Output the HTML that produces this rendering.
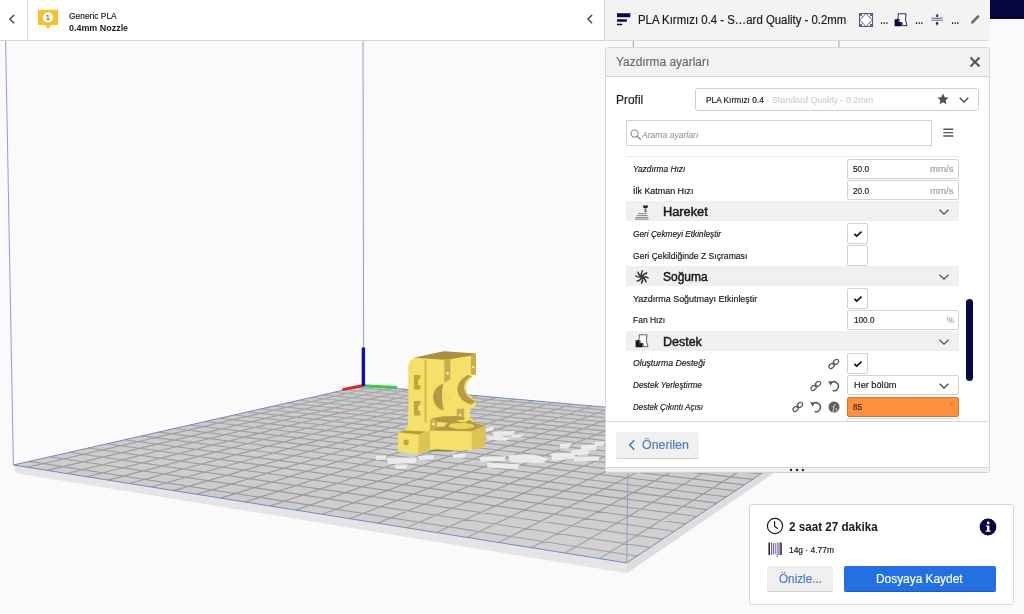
<!DOCTYPE html>
<html lang="tr">
<head>
<meta charset="utf-8">
<title>Cura - Yazdırma ayarları</title>
<style>
html,body{margin:0;padding:0}
body{width:1024px;height:614px;overflow:hidden;background:#fafafa;position:relative;font-family:"Liberation Sans", sans-serif;}
.a{position:absolute;box-sizing:border-box}
.t{position:absolute;white-space:pre;line-height:normal;font-family:"Liberation Sans", sans-serif;transform-origin:0 0;}
#tx{position:absolute;left:0;top:0;width:1024px;height:614px;will-change:transform}
svg{position:absolute;overflow:visible}
</style>
</head>
<body>
<div id="tx">
<svg width="1024" height="614" viewBox="0 0 1024 614" style="left:0;top:0">
<polygon points="14.4,465.0 626.7,562.9 626.7,573.2 15.4,473.0" fill="#e5e5e5"/>
<polygon points="626.7,562.9 831.0,427.3 831.0,434.3 626.7,573.2" fill="#dddddd"/>
<polygon points="363.7,385.6 13.4,465.0 626.7,562.9 831.0,427.3" fill="#cdcccc"/>
<path d="M355.8 387.4L826.9 430.0M375.8 386.7L27.6 467.3M345.1 389.8L821.2 433.8M392.1 388.1L47.0 470.4M334.1 392.3L815.4 437.6M408.7 389.6L66.8 473.5M322.8 394.9L809.4 441.6M425.6 391.1L87.1 476.8M311.1 397.5L803.1 445.8M442.8 392.7L107.9 480.1M299.2 400.2L796.7 450.1M460.3 394.2L129.3 483.5M286.9 403.0L790.0 454.5M478.1 395.8L151.2 487.0M274.3 405.9L783.1 459.1M496.2 397.4L173.7 490.6M261.2 408.8L775.9 463.9M514.7 399.1L196.8 494.3M247.9 411.9L768.4 468.9M533.4 400.7L220.6 498.1M234.1 415.0L760.6 474.0M552.6 402.5L244.9 502.0M219.8 418.2L752.6 479.4M572.0 404.2L270.0 506.0M205.2 421.5L744.2 484.9M591.9 406.0L295.8 510.1M190.1 425.0L735.4 490.7M612.1 407.8L322.3 514.3M174.5 428.5L726.3 496.8M632.7 409.6L349.5 518.7M158.4 432.1L716.8 503.1M653.6 411.5L377.6 523.1M141.8 435.9L706.9 509.6M675.0 413.4L406.5 527.7M124.6 439.8L696.6 516.5M696.8 415.3L436.3 532.5M106.8 443.8L685.8 523.7M719.1 417.3L467.0 537.4M88.4 448.0L674.4 531.2M741.8 419.3L498.6 542.5M69.4 452.3L662.5 539.1M764.9 421.4L531.3 547.7M49.7 456.8L650.1 547.4M788.5 423.5L565.0 553.1M29.2 461.4L637.0 556.1M812.6 425.7L599.8 558.6" stroke="#989898" stroke-width="1.15" fill="none"/>
<defs><linearGradient id="fade" gradientUnits="userSpaceOnUse" x1="0" y1="386" x2="0" y2="563"><stop offset="0" stop-color="#cac9c9" stop-opacity="0.36"/><stop offset="0.3" stop-color="#cac9c9" stop-opacity="0.12"/><stop offset="0.6" stop-color="#ffffff" stop-opacity="0"/><stop offset="1" stop-color="#ffffff" stop-opacity="0.15"/></linearGradient></defs>
<polygon points="363.7,385.6 13.4,465.0 626.7,562.9 831.0,427.3" fill="url(#fade)"/>
<g fill="#f0f0f0" opacity="0.9">
<polygon points="486.0,427.9 494.2,426.7 493.0,430.2 486.0,431.4" fill="#f0f0f0"/>
<polygon points="491.9,431.9 515.3,430.9 513.0,435.6 494.2,436.1" fill="#f0f0f0"/>
<polygon points="486.0,436.6 501.2,436.1 510.6,438.4 505.9,440.8 487.2,439.6" fill="#f0f0f0"/>
<polygon points="513.0,434.9 524.7,434.2 520.0,437.3 510.6,438.0" fill="#f0f0f0"/>
<polygon points="375.9,456.0 386.4,455.3 385.2,459.5 375.9,460.0" fill="#f0f0f0"/>
<polygon points="386.4,458.4 416.9,457.2 415.7,463.0 388.7,464.2" fill="#f0f0f0"/>
<polygon points="394.6,465.4 407.5,464.7 406.3,468.4 395.8,468.9" fill="#f0f0f0"/>
<polygon points="418.0,456.0 434.4,455.3 433.3,459.5 419.2,460.0" fill="#f0f0f0"/>
<polygon points="452.0,454.4 466.1,453.7 464.9,457.7 453.2,458.1" fill="#f0f0f0"/>
<polygon points="480.1,457.2 505.9,456.2 504.8,460.9 480.1,461.4" fill="#f0f0f0"/>
<polygon points="508.3,455.3 534.0,454.4 548.1,458.4 543.4,463.0 510.6,461.9" fill="#f0f0f0"/>
<polygon points="487.2,463.0 520.0,464.2 517.6,468.9 487.2,467.7" fill="#f0f0f0"/>
<polygon points="550.5,453.7 573.9,452.5 576.2,458.4 552.8,460.7" fill="#f0f0f0"/>
<polygon points="559.8,444.3 571.5,443.1 569.2,447.8 559.8,449.0" fill="#f0f0f0"/>
<polygon points="571.5,450.2 590.3,449.0 588.0,454.8 571.5,455.3" fill="#f0f0f0"/>
<polygon points="580.9,445.5 597.3,444.3 596.2,450.2 580.9,450.6" fill="#f0f0f0"/>
<polygon points="595.0,442.0 604.4,441.5 604.4,445.5 595.0,446.6" fill="#f0f0f0"/>
<polygon points="573.9,457.2 599.7,456.7 598.5,460.7 573.9,461.2" fill="#f0f0f0"/>
</g>
<polygon points="363.7,385.6 13.4,465.0 626.7,562.9 831.0,427.3" fill="none" stroke="#6f8cba" stroke-width="1"/>
<path d="M13.4 465.0L5.6 40M363.7 385.6L363 40M626.7 562.9L633.4 40M831.0 427.3L839 40" stroke="#86a2cc" stroke-width="1" fill="none"/>
<path d="M363.4 385.5L342.4 389.6" stroke="#d42a2a" stroke-width="3" fill="none"/>
<path d="M363.4 385.8L397 387.4" stroke="#3fc84a" stroke-width="3" fill="none"/>
<path d="M363.4 386L363.4 347.5" stroke="#0c0cb4" stroke-width="3.4" fill="none"/>
<g><polygon points="408.3,410.8 407.7,426.9 404.0,430.6 398.1,432.3 398.1,451.6 418.0,454.0 430.3,449.7 450.2,450.8 471.7,450.0 485.2,446.2 485.2,425.8 474.9,423.1 472.8,419.4 465.3,418.3 464.2,408.6 433.0,408.6" fill="#f5e069"/>
<polygon points="429.8,430.6 430.9,422.0 435.2,417.2 465.3,417.7 474.9,423.1 485.2,425.8 471.7,431.2" fill="#b59a44"/>
<ellipse cx="461.5" cy="426.1" rx="12.7" ry="3.2" fill="#e9cd58"/>
<ellipse cx="459.9" cy="425.1" rx="10.2" ry="1.9" fill="#f0d65c"/>
<polygon points="398.1,432.3 404.0,430.4 426.0,431.4 419.0,434.6" fill="#b59a44"/>
<polygon points="419.0,434.6 429.8,430.6 430.3,449.7 418.0,454.0" fill="#dfc254"/>
<polygon points="471.7,431.2 485.2,425.8 485.2,446.2 471.7,450.0" fill="#dfc254"/>
<ellipse cx="406.1" cy="442.5" rx="2.6" ry="2.9" fill="#c2a440"/>
<polygon points="425.5,451.4 435.2,449.2 454.5,450.5 450.2,451.6 433.0,451.2" fill="#8c8040"/>
<polygon points="408.3,411.0 408.3,366.5 409.9,361.1 413.7,357.7 443.8,351.5 475.5,353.4 476.0,375.1 470.6,375.6 465.8,380.5 464.2,388.0 465.8,395.5 470.6,400.9 476.0,400.9 475.5,405.8 470.1,409.5 470.1,419.2 465.3,422.4 450.2,420.3 443.8,426.7 430.9,426.7 425.5,422.4 408.3,422.4" fill="#f5e069"/>
<polygon points="413.9,357.7 443.8,351.2 475.5,353.4 470.9,355.8 445.9,359.8" fill="#a98f42"/>
<polygon points="470.9,355.8 476.0,353.6 476.0,375.1 470.9,374.2" fill="#cbae4c"/>
<polygon points="444.3,360.1 450.4,358.8 450.4,379.2 444.3,382.8" fill="#cbae4c"/>
<polygon points="424.6,360.1 426.6,360.3 426.6,422.4 424.6,422.4" fill="#d7b84a"/>
<polygon points="413.9,375.1 420.3,375.1 420.3,379.2 418.2,379.2 418.2,385.3 420.3,385.3 420.3,389.6 413.9,389.6" fill="#c3a540"/>
<polygon points="413.9,400.9 420.3,400.9 420.3,405.0 418.2,405.0 418.2,411.1 420.3,411.1 420.3,415.4 413.9,415.4" fill="#c3a540"/>
<path d="M443.2 383.5Q433.0 387.5 433.0 397.7Q434.1 407.9 443.8 410.6Q440.5 397.7 443.2 383.5Z" fill="#b59a44"/>
<path d="M467.6 374.9Q456.1 381.6 457.5 391.2Q459.9 402.0 471.7 404.4L476.0 401.1Q465.3 397.7 464.2 388.0Q464.2 379.9 471.9 376.0Z" fill="#b79b40"/>
<path d="M471.9 376.0Q464.2 379.9 464.2 388.0Q465.3 397.7 476.0 401.1L474.9 399.3Q466.9 396.1 466.1 388.0Q466.3 381.0 473.3 376.7Z" fill="#f2dc70"/>
<circle cx="447.5" cy="373.2" r="1.3" fill="#f8ecb4"/>
<circle cx="473.3" cy="367.0" r="1.2" fill="#f8ecb4"/>
<circle cx="444.3" cy="397.7" r="0.6" fill="#c8aa44"/>
<circle cx="449.1" cy="397.9" r="0.6" fill="#c8aa44"/>
<polygon points="456.7,409.1 464.2,408.6 464.2,420.4 456.7,419.4" fill="#cbae4c"/>
<circle cx="460.1" cy="415.1" r="1.2" fill="#f8ecb4"/>
<polygon points="430.3,418.8 437.3,422.0 436.2,429.0 430.3,430.6" fill="#cbae4c"/>
<circle cx="433.5" cy="423.9" r="1.4" fill="#f8ecb4"/>
<polygon points="431.4,418.3 443.8,416.3 456.7,416.1 465.3,418.3 450.2,423.1 437.3,422.0" fill="#b59a44"/></g>
</svg>
<!-- top bar -->
<div class="a" style="left:0;top:0;width:605px;height:41px;background:#fff;border-bottom:1px solid #d6d6d6"></div>
<div class="a" style="left:27px;top:0;width:1px;height:40px;background:#dedede"></div>
<svg width="8" height="12" viewBox="0 0 8 12" style="left:8px;top:13px"><path d="M6.1 1.9L1.9 6.1L6.1 10.3" fill="none" stroke="#454545" stroke-width="1.4"/></svg>
<svg width="8" height="12" viewBox="0 0 8 12" style="left:585.5px;top:13px"><path d="M6.1 1.9L1.9 6.1L6.1 10.3" fill="none" stroke="#454545" stroke-width="1.4"/></svg>
<!-- material marker -->
<svg width="22" height="22" viewBox="0 0 22 22" style="left:37px;top:9px"><path d="M2 0.7H20Q21 0.7 21 1.7V15Q21 16 20 16H14L11 20L8 16H2Q1 16 1 15V1.7Q1 0.7 2 0.7Z" fill="#f4c22e"/><circle cx="10.9" cy="8.4" r="5.1" fill="#fffdf2"/><text x="10.9" y="11.1" font-size="7.6" text-anchor="middle" fill="#333" font-family="Liberation Sans, sans-serif">1</text></svg>
<!-- top right gray -->
<div class="a" style="left:604px;top:0;width:386px;height:41px;background:#f3f3f3;border-left:1px solid #dadada;border-bottom:1px solid #dadada;border-radius:0 0 3px 0"></div>
<div class="a" style="left:990px;top:0;width:34px;height:19px;background:#08073f"></div>
<!-- profile icon -->
<svg width="16" height="16" viewBox="0 0 16 16" style="left:615.5px;top:12px"><path d="M1 1.2H14.3V5.2H1ZM1 7.2H10.8V9.7H1ZM1 11.8H6.2V13.2H1Z" fill="#08073f"/></svg>
<!-- infill icon -->
<svg width="14" height="14" viewBox="0 0 14 14" style="left:859px;top:12.5px"><rect x="0.5" y="0.5" width="13" height="13" fill="#fbfbfb" stroke="#4c4b72" stroke-width="0.9"/><path d="M7 0.5L13.5 7L7 13.5L0.5 7ZM3.6 0.5L0.5 3.6M10.4 0.5L13.5 3.6M0.5 10.4L3.6 13.5M13.5 10.4L10.4 13.5M0.5 0.5L3.7 3.7M13.5 0.5L10.3 3.7M0.5 13.5L3.7 10.3M13.5 13.5L10.3 10.3" stroke="#45446e" stroke-width="0.85" fill="none"/></svg>
<!-- support icon -->
<svg width="14" height="14" viewBox="0 0 14 14" style="left:893.8px;top:12.5px"><path d="M4.2 0.8H12Q10.3 6.5 13 12.6H8.2V9.6H5.2V6.6H3.4Q4.9 3.6 4.2 0.8Z" fill="#fff" stroke="#26255a" stroke-width="1"/><path d="M0.6 6.2H4.6V9.2H7.6V13.2H0.6Z" fill="#08073f"/></svg>
<!-- adhesion icon -->
<svg width="14" height="14" viewBox="0 0 14 14" style="left:929.7px;top:12.5px"><path d="M1.4 4.9Q7 6.1 12.8 4.9M1.4 7.2H12.8" stroke="#4a4a78" stroke-width="0.85" fill="none"/><path d="M7.1 4.6L5.5 2.4H6.6V0.9H7.6V2.4H8.7ZM7.1 8.6L8.7 10.8H7.6V12.6H6.6V10.8H5.5Z" fill="#08073f"/></svg>
<!-- pencil -->
<svg width="10.6" height="10.6" viewBox="0 0 12 12" style="left:969.5px;top:14px"><path d="M1 11L1.6 8.2L8.2 1.6Q9 0.8 9.8 1.6L10.4 2.2Q11.2 3 10.4 3.8L3.8 10.4Z" fill="#6e6e6e"/></svg>

<!-- settings panel -->
<div class="a" style="left:605px;top:47px;width:385px;height:426px;background:#fff;border:1px solid #d6d6d6;border-radius:3px"></div>
<div class="a" style="left:606px;top:48px;width:383px;height:29px;background:#f2f2f2;border-bottom:1px solid #d2d2d2;border-radius:2px 2px 0 0"></div>
<svg width="12" height="12" viewBox="0 0 12 12" style="left:969px;top:56px"><path d="M1.5 1.5L10.5 10.5M10.5 1.5L1.5 10.5" stroke="#555" stroke-width="2" fill="none"/></svg>
<!-- profile dropdown -->
<div class="a" style="left:695px;top:88px;width:284px;height:23px;background:#fff;border:1px solid #d0d0d0;border-radius:3px"></div>
<svg width="12" height="12" viewBox="0 0 13 13" style="left:937px;top:93px"><path d="M6.5 0.6L8.3 4.5L12.5 5L9.4 7.9L10.2 12.1L6.5 10L2.8 12.1L3.6 7.9L0.5 5L4.7 4.5Z" fill="#505050"/></svg>
<svg width="12" height="8" viewBox="0 0 12 8" style="left:958px;top:95.5px"><path d="M1.7 1.7L6 6L10.3 1.7" stroke="#454545" stroke-width="1.3" fill="none"/></svg>
<!-- search -->
<div class="a" style="left:626px;top:120px;width:306px;height:26px;background:#fff;border:1px solid #d2d2d2"></div>
<svg width="12" height="12" viewBox="0 0 12 12" style="left:630.2px;top:128.8px"><circle cx="4.6" cy="4.6" r="3.6" fill="none" stroke="#8a8a8a" stroke-width="1.1"/><path d="M7.2 7.2L10.8 10.8" stroke="#8a8a8a" stroke-width="1.3"/></svg>
<svg width="11" height="10" viewBox="0 0 11 10" style="left:942.5px;top:128px"><path d="M0.3 1.2H10.3M0.3 4.6H10.3M0.3 8H10.3" stroke="#555" stroke-width="1.4"/></svg>
<div class="a" style="left:626px;top:156px;width:333px;height:1px;background:#ececec"></div>
<!-- inputs -->
<div class="a" style="left:847px;top:159px;width:112px;height:20px;background:#fff;border:1px solid #d2d2d2;border-radius:2px"></div>
<div class="a" style="left:847px;top:180px;width:112px;height:20px;background:#fff;border:1px solid #d2d2d2;border-radius:2px"></div>
<div class="a" style="left:847px;top:310px;width:112px;height:20px;background:#fff;border:1px solid #d2d2d2;border-radius:2px"></div>
<div class="a" style="left:847px;top:375px;width:112px;height:20px;background:#fff;border:1px solid #d2d2d2;border-radius:2px"></div>
<div class="a" style="left:847px;top:397px;width:112px;height:20px;background:#ff913e;border:1px solid #c47a3c;border-radius:2px"></div>
<div class="a" style="left:847px;top:418px;width:112px;height:4px;background:#fff;border:1px solid #d8d8d8;border-bottom:none;border-radius:2px 2px 0 0"></div>
<!-- category headers -->
<div class="a" style="left:626px;top:201px;width:333px;height:20px;background:#f0f0f0"></div>
<div class="a" style="left:626px;top:266px;width:333px;height:20px;background:#f0f0f0"></div>
<div class="a" style="left:626px;top:331px;width:333px;height:20px;background:#f0f0f0"></div>
<svg width="12" height="8" viewBox="0 0 12 8" style="left:938px;top:208px"><path d="M1.5 1.7L6 6.1L10.5 1.7" stroke="#555" stroke-width="1.3" fill="none"/></svg>
<svg width="12" height="8" viewBox="0 0 12 8" style="left:938px;top:273px"><path d="M1.5 1.7L6 6.1L10.5 1.7" stroke="#555" stroke-width="1.3" fill="none"/></svg>
<svg width="12" height="8" viewBox="0 0 12 8" style="left:938px;top:337.8px"><path d="M1.5 1.7L6 6.1L10.5 1.7" stroke="#555" stroke-width="1.3" fill="none"/></svg>
<svg width="12" height="8" viewBox="0 0 12 8" style="left:938px;top:381.5px"><path d="M1.7 1.7L6 6L10.3 1.7" stroke="#454545" stroke-width="1.3" fill="none"/></svg>
<!-- category icons -->
<svg width="14" height="15" viewBox="0 0 14 15" style="left:635px;top:204.5px"><path d="M8 0.6H13Q13 3.4 10.5 3.6Q8 3.4 8 0.6Z" fill="#222"/><path d="M9.6 4.2H11.4V7H9.6Z" fill="#555"/><path d="M3 8.6H11.5M1.8 10.6H12.5M0.4 12.6H13.4M0.2 14.2H13.6" stroke="#555" stroke-width="0.7"/></svg>
<svg width="14" height="14" viewBox="0 0 14 14" style="left:634.5px;top:269.5px"><g fill="none" stroke="#333" stroke-width="1.5" stroke-linecap="round"><path d="M7 6.2Q5.6 3.6 7.4 0.9"/><path d="M7.8 6.4Q8.6 3.5 11.8 2.9"/><path d="M7.8 7.6Q10.4 6.2 13.1 8"/><path d="M7 7.8Q8.4 10.4 6.6 13.1"/><path d="M6.2 7.6Q5.4 10.5 2.2 11.1"/><path d="M6.2 6.4Q3.6 7.8 0.9 6"/><path d="M6.4 6.2Q3.6 5.3 3 2.2"/><path d="M7.6 7.8Q10.4 8.7 11 11.8"/></g></svg>
<svg width="14" height="14" viewBox="0 0 14 14" style="left:634.5px;top:334px"><path d="M4.2 0.8H12Q10.3 6.5 13 12.6H8.2V9.6H5.2V6.6H3.4Q4.9 3.6 4.2 0.8Z" fill="#fff" stroke="#555" stroke-width="0.9"/><path d="M0.6 6.2H4.6V9.2H7.6V13.2H0.6Z" fill="#1a1a1a"/></svg>
<!-- checkboxes -->
<div class="a" style="left:847px;top:223px;width:21px;height:21px;background:#fff;border:1px solid #d2d2d2;border-radius:2px"></div>
<div class="a" style="left:847px;top:245px;width:21px;height:21px;background:#fff;border:1px solid #d2d2d2;border-radius:2px"></div>
<div class="a" style="left:847px;top:288px;width:21px;height:21px;background:#fff;border:1px solid #d2d2d2;border-radius:2px"></div>
<div class="a" style="left:847px;top:353px;width:21px;height:21px;background:#fff;border:1px solid #d2d2d2;border-radius:2px"></div>
<svg width="10" height="8" viewBox="0 0 10 8" style="left:853px;top:229.7px"><path d="M1.3 3.9L3.7 6.2L8.5 1.6" stroke="#111" stroke-width="1.6" fill="none"/></svg>
<svg width="10" height="8" viewBox="0 0 10 8" style="left:853px;top:294.6px"><path d="M1.3 3.9L3.7 6.2L8.5 1.6" stroke="#111" stroke-width="1.6" fill="none"/></svg>
<svg width="10" height="8" viewBox="0 0 10 8" style="left:853px;top:359.6px"><path d="M1.3 3.9L3.7 6.2L8.5 1.6" stroke="#111" stroke-width="1.6" fill="none"/></svg>
<!-- link / revert / fx icons -->
<svg width="12" height="12" viewBox="0 0 12 12" style="left:828px;top:357.8px" class="lk"><g fill="none" stroke="#585858" stroke-width="1.25"><rect x="-2.9" y="-2.05" width="5.8" height="4.1" rx="2.05" transform="translate(3.6 7.9) rotate(-42)"/><rect x="-2.9" y="-2.05" width="5.8" height="4.1" rx="2.05" transform="translate(8 3.9) rotate(-42)"/><path d="M4.7 6.9L6.9 4.9"/></g></svg>
<svg width="12" height="12" viewBox="0 0 12 12" style="left:809.8px;top:379.5px"><g fill="none" stroke="#585858" stroke-width="1.25"><rect x="-2.9" y="-2.05" width="5.8" height="4.1" rx="2.05" transform="translate(3.6 7.9) rotate(-42)"/><rect x="-2.9" y="-2.05" width="5.8" height="4.1" rx="2.05" transform="translate(8 3.9) rotate(-42)"/><path d="M4.7 6.9L6.9 4.9"/></g></svg>
<svg width="12" height="12" viewBox="0 0 12 12" style="left:791.6px;top:401px"><g fill="none" stroke="#585858" stroke-width="1.25"><rect x="-2.9" y="-2.05" width="5.8" height="4.1" rx="2.05" transform="translate(3.6 7.9) rotate(-42)"/><rect x="-2.9" y="-2.05" width="5.8" height="4.1" rx="2.05" transform="translate(8 3.9) rotate(-42)"/><path d="M4.7 6.9L6.9 4.9"/></g></svg>
<svg width="12" height="12" viewBox="0 0 12 12" style="left:828px;top:379.5px"><path d="M2.6 3.2A4.5 4.5 0 1 1 4.6 10.6" fill="none" stroke="#585858" stroke-width="1.5"/><path d="M0.2 1.2L5 1.4L2.6 5.8Z" fill="#585858"/></svg>
<svg width="12" height="12" viewBox="0 0 12 12" style="left:809.8px;top:401px"><path d="M2.6 3.2A4.5 4.5 0 1 1 4.6 10.6" fill="none" stroke="#585858" stroke-width="1.5"/><path d="M0.2 1.2L5 1.4L2.6 5.8Z" fill="#585858"/></svg>
<svg width="12" height="12" viewBox="0 0 12 12" style="left:828px;top:401px"><circle cx="6" cy="6" r="5.5" fill="#5e5e5e"/><text x="5.6" y="8.8" font-size="8" font-style="italic" font-family="Liberation Serif, serif" fill="#fff" text-anchor="middle">f</text><text x="8.4" y="9.6" font-size="4.5" font-family="Liberation Sans, sans-serif" fill="#fff" text-anchor="middle">x</text></svg>
<!-- scrollbar -->
<div class="a" style="left:966px;top:299px;width:7px;height:81.5px;background:#08073f;border-radius:3.5px"></div>
<!-- footer -->
<div class="a" style="left:606px;top:417px;width:383px;height:4px;background:#fff"></div>
<div class="a" style="left:847px;top:418px;width:112px;height:3px;background:#fff;border:1px solid #dcdcdc;border-bottom:none;border-radius:2px 2px 0 0"></div>
<div class="a" style="left:606px;top:420.5px;width:383px;height:47px;background:#fff;border-top:1px solid #dadada"></div>
<div class="a" style="left:616px;top:432px;width:83px;height:27px;background:#f0f0f0;border-bottom:1px solid #d2d2d2;border-radius:2px"></div>
<svg width="8" height="12" viewBox="0 0 8 12" style="left:627.5px;top:438.5px"><path d="M6.2 1.3L1.8 6L6.2 10.7" fill="none" stroke="#4a7dbf" stroke-width="1.6"/></svg>
<div class="a" style="left:606px;top:467px;width:383px;height:6px;background:#f1f1f1;border-top:1px solid #d6d6d6;border-bottom:1px solid #d2d2d2;border-radius:0 0 2px 2px"></div>
<svg width="16" height="4" viewBox="0 0 16 4" style="left:789.4px;top:468.3px"><circle cx="2" cy="2" r="1.25" fill="#2a2a2a"/><circle cx="8" cy="2" r="1.25" fill="#2a2a2a"/><circle cx="13.9" cy="2" r="1.25" fill="#2a2a2a"/></svg>

<!-- action panel -->
<div class="a" style="left:749px;top:504px;width:265px;height:101px;background:#fff;border:1px solid #d8d8d8;border-radius:3px"></div>
<svg width="18" height="18" viewBox="0 0 18 18" style="left:766px;top:517px"><circle cx="9" cy="9" r="7.6" fill="none" stroke="#191919" stroke-width="1.2"/><path d="M8.6 4.2V9.4L12 11.8" fill="none" stroke="#191919" stroke-width="1.2"/></svg>
<svg width="18" height="18" viewBox="0 0 18 18" style="left:978.5px;top:517.6px"><circle cx="9" cy="9" r="8.4" fill="#08073f"/><circle cx="9.2" cy="4.9" r="1.4" fill="#fff"/><path d="M7 7.4H10.4V12.4H11.6V13.8H6.8V12.4H8V8.8H7Z" fill="#fff"/></svg>
<svg width="16" height="16" viewBox="0 0 16 16" style="left:767.6px;top:541.5px"><path d="M1.2 0.4V13M13 0.4V13" stroke="#1b1a4e" stroke-width="1.5" fill="none"/><path d="M3.7 0.4V13M11 0.4V13" stroke="#3c3b66" stroke-width="0.9" fill="none"/><path d="M5.5 1V12.4M7.3 1V12.4M9.2 0.4V15.4" stroke="#55557a" stroke-width="0.8" fill="none"/></svg>
<div class="a" style="left:767px;top:566px;width:66px;height:26px;background:#f0f0f0;border-bottom:1px solid #d0d0d0;border-radius:2px"></div>
<div class="a" style="left:844px;top:566px;width:152px;height:26px;background:#2270e2;border-bottom:1px solid #1a5bbd;border-radius:2px"></div>

<div class="t" style="left:68.70px;top:10.96px;font-size:9px;color:#191919;transform:scaleX(0.9347);-webkit-text-stroke:0.18px currentColor;">Generic PLA</div>
<div class="t" style="left:68.70px;top:22.66px;font-size:9px;font-weight:700;color:#191919;transform:scaleX(0.9928);">0.4mm Nozzle</div>
<div class="t" style="left:637.50px;top:13.34px;font-size:12px;color:#191919;transform:scaleX(0.9494);-webkit-text-stroke:0.18px currentColor;">PLA Kırmızı 0.4 - S…ard Quality - 0.2mm</div>
<div class="t" style="left:879.60px;top:13.90px;font-size:10.5px;font-weight:700;color:#191919;transform:scaleX(0.8000);">…</div>
<div class="t" style="left:914.80px;top:13.90px;font-size:10.5px;font-weight:700;color:#191919;transform:scaleX(0.8000);">…</div>
<div class="t" style="left:950.60px;top:13.90px;font-size:10.5px;font-weight:700;color:#191919;transform:scaleX(0.8000);">…</div>
<div class="t" style="left:615.50px;top:55.04px;font-size:12px;color:#6a6a6a;transform:scaleX(0.9935);-webkit-text-stroke:0.18px currentColor;">Yazdırma ayarları</div>
<div class="t" style="left:616.20px;top:93.04px;font-size:12px;color:#191919;transform:scaleX(0.9947);-webkit-text-stroke:0.18px currentColor;">Profil</div>
<div class="t" style="left:706.00px;top:94.76px;font-size:9px;color:#191919;transform:scaleX(0.9243);-webkit-text-stroke:0.18px currentColor;">PLA Kırmızı 0.4</div>
<div class="t" style="left:763.80px;top:94.76px;font-size:9px;color:#cfcfcf;transform:scaleX(0.9869);-webkit-text-stroke:0.18px currentColor;"> - Standard Quality - 0.2mm</div>
<div class="t" style="left:642.00px;top:130.16px;font-size:9px;font-style:italic;color:#a0a0a0;transform:scaleX(0.9537);-webkit-text-stroke:0.18px currentColor;">Arama ayarları</div>
<div class="t" style="left:633.10px;top:163.75px;font-size:9px;font-style:italic;color:#191919;transform:scaleX(0.9280);-webkit-text-stroke:0.18px currentColor;">Yazdırma Hızı</div>
<div class="t" style="left:633.10px;top:185.66px;font-size:9px;color:#191919;transform:scaleX(0.9897);-webkit-text-stroke:0.18px currentColor;">İlk Katman Hızı</div>
<div class="t" style="left:633.10px;top:228.75px;font-size:9px;font-style:italic;color:#191919;transform:scaleX(0.9174);-webkit-text-stroke:0.18px currentColor;">Geri Çekmeyi Etkinleştir</div>
<div class="t" style="left:633.10px;top:250.85px;font-size:9px;color:#191919;transform:scaleX(0.9561);-webkit-text-stroke:0.18px currentColor;">Geri Çekildiğinde Z Sıçraması</div>
<div class="t" style="left:633.10px;top:293.86px;font-size:9px;color:#191919;transform:scaleX(0.9953);-webkit-text-stroke:0.18px currentColor;">Yazdırma Soğutmayı Etkinleştir</div>
<div class="t" style="left:633.10px;top:315.36px;font-size:9px;color:#191919;transform:scaleX(0.9407);-webkit-text-stroke:0.18px currentColor;">Fan Hızı</div>
<div class="t" style="left:633.10px;top:358.36px;font-size:9px;font-style:italic;color:#191919;transform:scaleX(0.9647);-webkit-text-stroke:0.18px currentColor;">Oluşturma Desteği</div>
<div class="t" style="left:633.10px;top:380.25px;font-size:9px;font-style:italic;color:#191919;transform:scaleX(0.9128);-webkit-text-stroke:0.18px currentColor;">Destek Yerleştirme</div>
<div class="t" style="left:633.10px;top:401.86px;font-size:9px;font-style:italic;color:#191919;transform:scaleX(0.8881);-webkit-text-stroke:0.18px currentColor;">Destek Çıkıntı Açısı</div>
<div class="t" style="left:662.50px;top:204.94px;font-size:12px;color:#191919;transform:scaleX(1.0659);-webkit-text-stroke:0.45px #191919;">Hareket</div>
<div class="t" style="left:662.50px;top:270.04px;font-size:12px;color:#191919;transform:scaleX(0.9977);-webkit-text-stroke:0.45px #191919;">Soğuma</div>
<div class="t" style="left:662.50px;top:335.04px;font-size:12px;color:#191919;transform:scaleX(1.0386);-webkit-text-stroke:0.45px #191919;">Destek</div>
<div class="t" style="left:853.40px;top:164.16px;font-size:9px;color:#191919;transform:scaleX(0.9127);-webkit-text-stroke:0.18px currentColor;">50.0</div>
<div class="t" style="left:853.40px;top:185.85px;font-size:9px;color:#191919;transform:scaleX(0.9127);-webkit-text-stroke:0.18px currentColor;">20.0</div>
<div class="t" style="left:853.80px;top:315.36px;font-size:9px;color:#191919;transform:scaleX(0.9098);-webkit-text-stroke:0.18px currentColor;">100.0</div>
<div class="t" style="left:930.40px;top:164.16px;font-size:9px;color:#a0a0a0;transform:scaleX(1.0682);-webkit-text-stroke:0.18px currentColor;">mm/s</div>
<div class="t" style="left:930.40px;top:185.85px;font-size:9px;color:#a0a0a0;transform:scaleX(1.0682);-webkit-text-stroke:0.18px currentColor;">mm/s</div>
<div class="t" style="left:946.60px;top:315.36px;font-size:9px;color:#a0a0a0;transform:scaleX(0.8608);-webkit-text-stroke:0.18px currentColor;">%</div>
<div class="t" style="left:853.80px;top:380.25px;font-size:9px;color:#191919;transform:scaleX(1.0213);-webkit-text-stroke:0.18px currentColor;">Her bölüm</div>
<div class="t" style="left:853.40px;top:401.86px;font-size:9px;color:#42240c;transform:scaleX(0.9186);-webkit-text-stroke:0.18px currentColor;">85</div>
<div class="t" style="left:949.50px;top:401.86px;font-size:9px;color:#c07030;transform:scaleX(0.8312);-webkit-text-stroke:0.18px currentColor;">°</div>
<div class="t" style="left:641.60px;top:438.04px;font-size:12px;color:#4a7dbf;transform:scaleX(1.0318);-webkit-text-stroke:0.18px currentColor;">Önerilen</div>
<div class="t" style="left:789.40px;top:520.34px;font-size:12px;font-weight:700;color:#191919;transform:scaleX(0.9704);">2 saat 27 dakika</div>
<div class="t" style="left:789.40px;top:544.86px;font-size:9px;color:#191919;transform:scaleX(0.9348);-webkit-text-stroke:0.18px currentColor;">14g · 4.77m</div>
<div class="t" style="left:778.50px;top:571.64px;font-size:12px;color:#4a7dbf;transform:scaleX(0.9769);-webkit-text-stroke:0.18px currentColor;">Önizle...</div>
<div class="t" style="left:876.20px;top:571.64px;font-size:12px;color:#ffffff;transform:scaleX(0.9910);-webkit-text-stroke:0.18px currentColor;">Dosyaya Kaydet</div>
</div>
</body>
</html>
